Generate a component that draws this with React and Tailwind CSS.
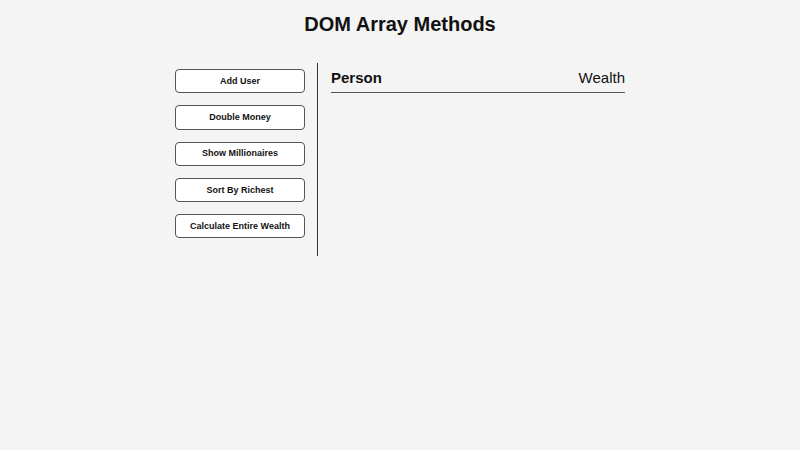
export default function App() {
  const buttons = ["Add User", "Double Money", "Show Millionaires", "Sort By Richest", "Calculate Entire Wealth"];
  return (
    <div className="min-h-[450px] w-full bg-[#f4f4f4] text-[#111]" style={{ fontFamily: '"Liberation Sans", Arial, sans-serif' }}>
      <h1 className="m-0 pt-[12px] text-center text-[20px] font-bold leading-[25px]">DOM Array Methods</h1>
      <div className="mx-auto mt-[26px] flex w-[490px]">
        <aside className="w-[163px] border-r border-[#333] pb-[6px] pl-[20px] pr-[13px] pt-[6px]">
          {buttons.map((b) => (
            <button
              key={b}
              className="mb-[12px] block h-[24.25px] w-[130px] rounded-[4px] border border-[#555] bg-white pt-[1px] text-[9px] font-bold text-[#111]"
            >
              {b}
            </button>
          ))}
        </aside>
        <main className="flex-1 pl-[13px] pr-[20px] pt-[6px]">
          <h2 className="m-0 flex justify-between border-b border-[#555] pb-[6px] text-[15px] leading-[17px]">
            <strong className="font-bold">Person</strong>
            <span className="font-normal">Wealth</span>
          </h2>
        </main>
      </div>
    </div>
  );
}
